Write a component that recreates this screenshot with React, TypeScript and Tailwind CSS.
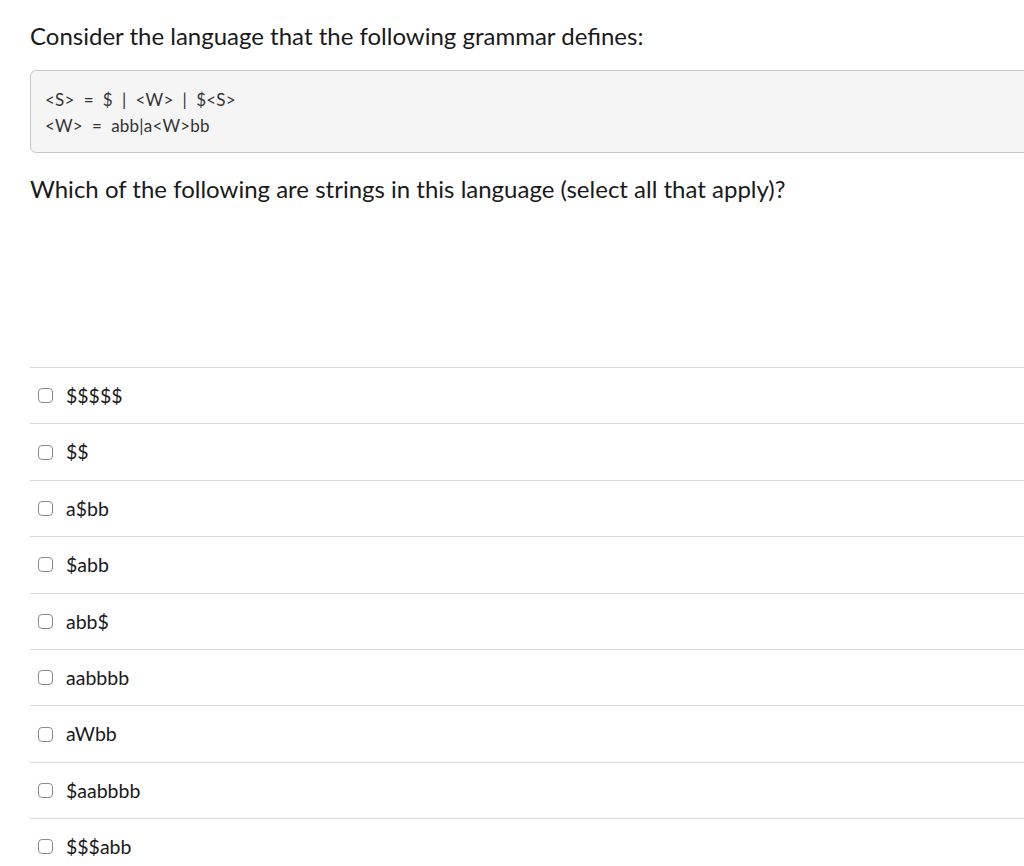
export default function App() {
  const options = ["$$$$$", "$$", "a$bb", "$abb", "abb$", "aabbbb", "aWbb", "$aabbbb", "$$$abb"];
  return (
    <div className="w-[1024px] h-[866px] overflow-hidden bg-white text-[#1a1a1a]" style={{ fontFamily: "Lato, 'Open Sans', sans-serif" }}>
      <div className="pl-[30px] pt-[19px]">
        <p className="text-[24px] leading-[34px]">Consider the language that the following grammar defines:</p>
        <div className="mt-[17px] -mr-4 h-[83px] rounded-md border border-[#c8c8c8] bg-[#f5f5f5] pl-[14px] pt-[16px] text-[17px] leading-[26px] tracking-[0.2px] text-[#333]">
          <div className="whitespace-pre">{"<S>  =  $  |  <W>  |  $<S>"}</div>
          <div className="whitespace-pre">{"<W>  =  abb|a<W>bb"}</div>
        </div>
        <p className="mt-[19px] text-[24px] leading-[34px]">Which of the following are strings in this language (select all that apply)?</p>
        <div className="mt-[161px]">
          {options.map((o) => (
            <div key={o} className="flex h-[56.4px] items-center border-t border-[#d9d9d9] pl-[8px]">
              <span className="h-[15px] w-[15px] rounded-[4px] border border-[#8a8a8a] bg-white" />
              <span className="ml-[13px] text-[19.5px]">{o}</span>
            </div>
          ))}
        </div>
      </div>
    </div>
  );
}
